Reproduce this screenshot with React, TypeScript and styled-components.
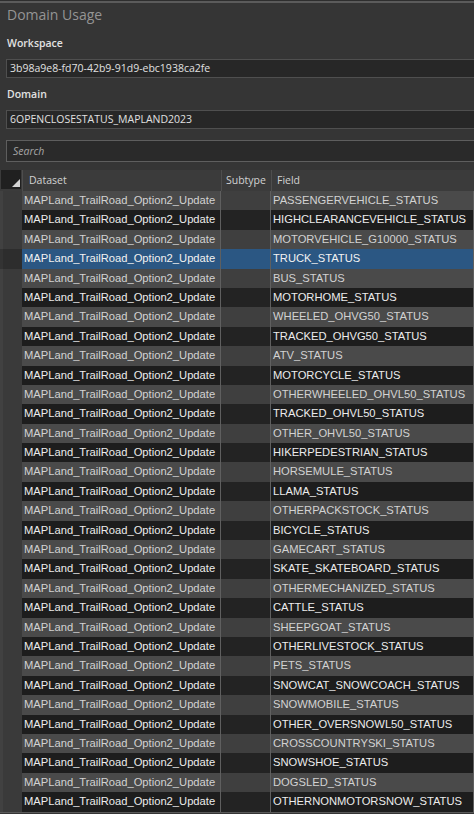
import styled, { createGlobalStyle } from 'styled-components';

const DATASET = 'MAPLand_TrailRoad_Option2_Update';

const FIELDS = [
  'PASSENGERVEHICLE_STATUS',
  'HIGHCLEARANCEVEHICLE_STATUS',
  'MOTORVEHICLE_G10000_STATUS',
  'TRUCK_STATUS',
  'BUS_STATUS',
  'MOTORHOME_STATUS',
  'WHEELED_OHVG50_STATUS',
  'TRACKED_OHVG50_STATUS',
  'ATV_STATUS',
  'MOTORCYCLE_STATUS',
  'OTHERWHEELED_OHVL50_STATUS',
  'TRACKED_OHVL50_STATUS',
  'OTHER_OHVL50_STATUS',
  'HIKERPEDESTRIAN_STATUS',
  'HORSEMULE_STATUS',
  'LLAMA_STATUS',
  'OTHERPACKSTOCK_STATUS',
  'BICYCLE_STATUS',
  'GAMECART_STATUS',
  'SKATE_SKATEBOARD_STATUS',
  'OTHERMECHANIZED_STATUS',
  'CATTLE_STATUS',
  'SHEEPGOAT_STATUS',
  'OTHERLIVESTOCK_STATUS',
  'PETS_STATUS',
  'SNOWCAT_SNOWCOACH_STATUS',
  'SNOWMOBILE_STATUS',
  'OTHER_OVERSNOWL50_STATUS',
  'CROSSCOUNTRYSKI_STATUS',
  'SNOWSHOE_STATUS',
  'DOGSLED_STATUS',
  'OTHERNONMOTORSNOW_STATUS',
];

const SELECTED = 3;

type Tone = 'light' | 'dark' | 'selected';

const GlobalStyle = createGlobalStyle`
  html, body {
    margin: 0;
    padding: 0;
    background: #2e2e2e;
    overflow: hidden;
  }
  * {
    box-sizing: border-box;
  }
`;

const Panel = styled.div`
  margin-top: 1px;
  width: 474px;
  height: 813px;
  display: flex;
  flex-direction: column;
  background: #353535;
  border-top: 2px solid #5b5b5b;
  font-family: 'Open Sans', 'Noto Sans', sans-serif;
  overflow: hidden;
`;

const Title = styled.div`
  height: 24px;
  line-height: 24px;
  padding-left: 7px;
  font-size: 14px;
  color: #949494;
`;

const Label = styled.div`
  margin-top: 8px;
  height: 16px;
  line-height: 16px;
  padding-left: 7px;
  font-size: 10.5px;
  font-weight: 600;
  color: #e2e2e2;
`;

const Field = styled.div`
  margin: 8px 0 0 6px;
  height: 19px;
  line-height: 17px;
  padding-left: 3px;
  background: #272727;
  border: 1px solid #4f4f4f;
  border-right: none;
  font-size: 10.5px;
  color: #e0e0e0;
  white-space: nowrap;
`;

const Search = styled.div`
  margin: 11px 0 0 6px;
  height: 22px;
  line-height: 20px;
  padding-left: 6px;
  background: #2a2a2a;
  border: 1px solid #5e5e5e;
  border-right: none;
  font-size: 10.5px;
  font-style: italic;
  color: #a6a6a6;
`;

const Grid = styled.div`
  margin-top: 8px;
  display: flex;
  flex-direction: column;
  border-bottom: 1px solid #5a5a5a;
  font-family: 'Liberation Sans', Arial, sans-serif;
`;

const HeaderRow = styled.div`
  display: grid;
  grid-template-columns: 22px 199px 50px 1fr;
  height: 21px;
  background: #3b3b3b;
  font-family: 'Open Sans', 'Noto Sans', sans-serif;
  font-size: 10.5px;
  color: #d2d2d2;
`;

const Corner = styled.div`
  margin: 0 1px 2px 1px;
  background: #202020;
  display: flex;
  align-items: flex-end;
  justify-content: flex-end;
  padding: 0 1px 2px 0;
`;

const HeaderCell = styled.div<{ $pad: number }>`
  line-height: 21px;
  padding-left: ${(p) => p.$pad}px;
  border-left: 1px solid #4e4e4e;
  white-space: nowrap;
  overflow: hidden;
`;

const Row = styled.div`
  display: grid;
  grid-template-columns: 22px 199px 50px 1fr;
  height: 19.4px;
`;

const rowBg: Record<Tone, string> = {
  light: '#4a4a4a',
  dark: '#1d1d1d',
  selected: '#2b5783',
};

const subBg: Record<Tone, string> = {
  light: '#3f3f3f',
  dark: '#232323',
  selected: '#2b5783',
};

const textColor: Record<Tone, string> = {
  light: '#d2d2d2',
  dark: '#ececec',
  selected: '#f2f2f2',
};

const RowHead = styled.div<{ $tone: Tone }>`
  background: ${(p) => (p.$tone === 'selected' ? '#2d2d2d' : '#3a3a3a')};
  border-left: 3px solid ${(p) => (p.$tone === 'selected' ? '#333' : '#414141')};
`;

const Cell = styled.div<{ $tone: Tone; $sub?: boolean }>`
  background: ${(p) => (p.$sub ? subBg[p.$tone] : rowBg[p.$tone])};
  color: ${(p) => textColor[p.$tone]};
  border-right: 1px solid #5f5f5f;
  padding-left: 2px;
  font-size: 11.2px;
  line-height: 19.4px;
  white-space: nowrap;
  overflow: hidden;
`;

function SortMark() {
  return (
    <svg width="8" height="8" viewBox="0 0 8 8">
      <path d="M8 0 L8 8 L0 8 Z" fill="#d4d4d4" />
    </svg>
  );
}

export default function App() {
  return (
    <>
      <GlobalStyle />
      <Panel>
        <Title>Domain Usage</Title>
        <Label>Workspace</Label>
        <Field>3b98a9e8-fd70-42b9-91d9-ebc1938ca2fe</Field>
        <Label>Domain</Label>
        <Field>6OPENCLOSESTATUS_MAPLAND2023</Field>
        <Search>Search</Search>
        <Grid>
          <HeaderRow>
            <Corner>
              <SortMark />
            </Corner>
            <HeaderCell $pad={6}>Dataset</HeaderCell>
            <HeaderCell $pad={4}>Subtype</HeaderCell>
            <HeaderCell $pad={5}>Field</HeaderCell>
          </HeaderRow>
          {FIELDS.map((field, i) => {
            const tone: Tone =
              i === SELECTED ? 'selected' : i % 2 === 0 ? 'light' : 'dark';
            return (
              <Row key={field}>
                <RowHead $tone={tone} />
                <Cell $tone={tone}>{DATASET}</Cell>
                <Cell $tone={tone} $sub />
                <Cell $tone={tone}>{field}</Cell>
              </Row>
            );
          })}
        </Grid>
      </Panel>
    </>
  );
}
